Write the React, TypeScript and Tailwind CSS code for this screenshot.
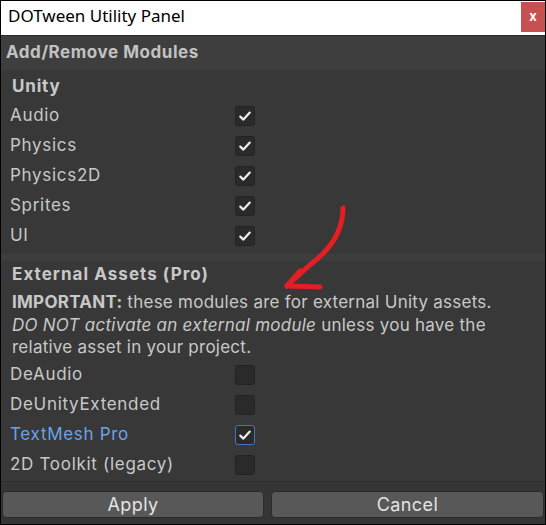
import React from "react";

const Check = ({ on, focus }: { on?: boolean; focus?: boolean }) => (
  <div
    className={`w-[20px] h-[20px] rounded-[3px] flex items-center justify-center bg-[#2a2a2a] border ${
      focus ? "border-[#3a79bb]" : "border-[#232323]"
    }`}
  >
    {on && (
      <svg width="14" height="14" viewBox="0 0 14 14">
        <path d="M2.3 7.6 L5.4 10.6 L11.8 3.6" fill="none" stroke="#ededed" strokeWidth="2.2" strokeLinecap="round" strokeLinejoin="round" />
      </svg>
    )}
  </div>
);

const Row = ({ label, on, blue }: { label: string; on?: boolean; blue?: boolean }) => (
  <div className="h-[30px] flex items-center">
    <div className={`w-[234px] pl-[9px] tracking-[0.7px] ${blue ? "text-[#6aa3e8]" : "text-[#c8c8c8]"}`}>{label}</div>
    <Check on={on} focus={blue} />
  </div>
);

export default function App() {
  return (
    <div
      className="w-[546px] h-[525px] border border-black bg-[#383838] flex flex-col overflow-hidden relative"
      style={{ fontFamily: "Inter, 'Noto Sans', sans-serif" }}
    >
      <div className="h-[34px] bg-white flex items-start justify-between shrink-0">
        <div className="pl-[7px] pt-[2px] text-[17px] text-black" style={{ fontFamily: "'Noto Sans', 'Open Sans', sans-serif" }}>
          DOTween Utility Panel
        </div>
        <div className="mt-[1px] w-[24px] h-[30px] bg-[#c75050] flex items-center justify-center text-white font-bold text-[13px]">
          x
        </div>
      </div>
      <div className="h-[35px] bg-[#3e3e3e] border-t border-[#2a2a2a] flex items-center pl-[5px] text-[17px] font-bold tracking-[0.55px] text-[#c2c2c2] shrink-0">
        Add/Remove Modules
      </div>
      <div className="flex-1 flex flex-col text-[17px] text-[#c8c8c8] bg-[#383838] pt-[2px]">
        <div className="h-[29px] flex items-center pl-[11px] font-bold tracking-[0.8px] text-[#c8c8c8]">Unity</div>
        <Row label="Audio" on />
        <Row label="Physics" on />
        <Row label="Physics2D" on />
        <Row label="Sprites" on />
        <Row label="UI" on />
        <div className="mt-[3px] h-[7px] bg-[#3d3d3d]" />
        <div className="h-[28px] flex items-center pl-[11px] font-bold tracking-[1.05px]">External Assets (Pro)</div>
        <div className="pl-[11px] pt-[2px] leading-[22.5px] h-[71px] tracking-[0.25px]">
          <b>IMPORTANT:</b> these modules are for external Unity assets.
          <br />
          <i>DO NOT activate an external module</i> unless you have the
          <br />
          relative asset in your project.
        </div>
        <Row label="DeAudio" />
        <Row label="DeUnityExtended" />
        <Row label="TextMesh Pro" on blue />
        <Row label="2D Toolkit (legacy)" />
      </div>
      <div className="h-[43px] bg-[#353535] border-t border-[#2e2e2e] flex items-start pt-[9px] pl-[1px] gap-[7px] shrink-0">
        <button className="w-[262px] h-[27px] rounded-[4px] bg-[#585858] border border-[#2a2a2a] text-[18px] tracking-[0.4px] text-[#e4e4e4] leading-none">
          Apply
        </button>
        <button className="w-[273px] h-[27px] rounded-[4px] bg-[#585858] border border-[#2a2a2a] text-[18px] tracking-[0.4px] text-[#e4e4e4] leading-none">
          Cancel
        </button>
      </div>
      <svg className="absolute left-0 top-0 pointer-events-none" width="546" height="525">
        <path d="M342 207 C 342 230, 330 248, 310 263 C 300 272, 292 279, 286 285" fill="none" stroke="#e31e24" strokeWidth="5" strokeLinecap="round" />
        <path d="M299 270 L286 285 L319 286" fill="none" stroke="#e31e24" strokeWidth="5" strokeLinecap="round" strokeLinejoin="round" />
      </svg>
    </div>
  );
}
